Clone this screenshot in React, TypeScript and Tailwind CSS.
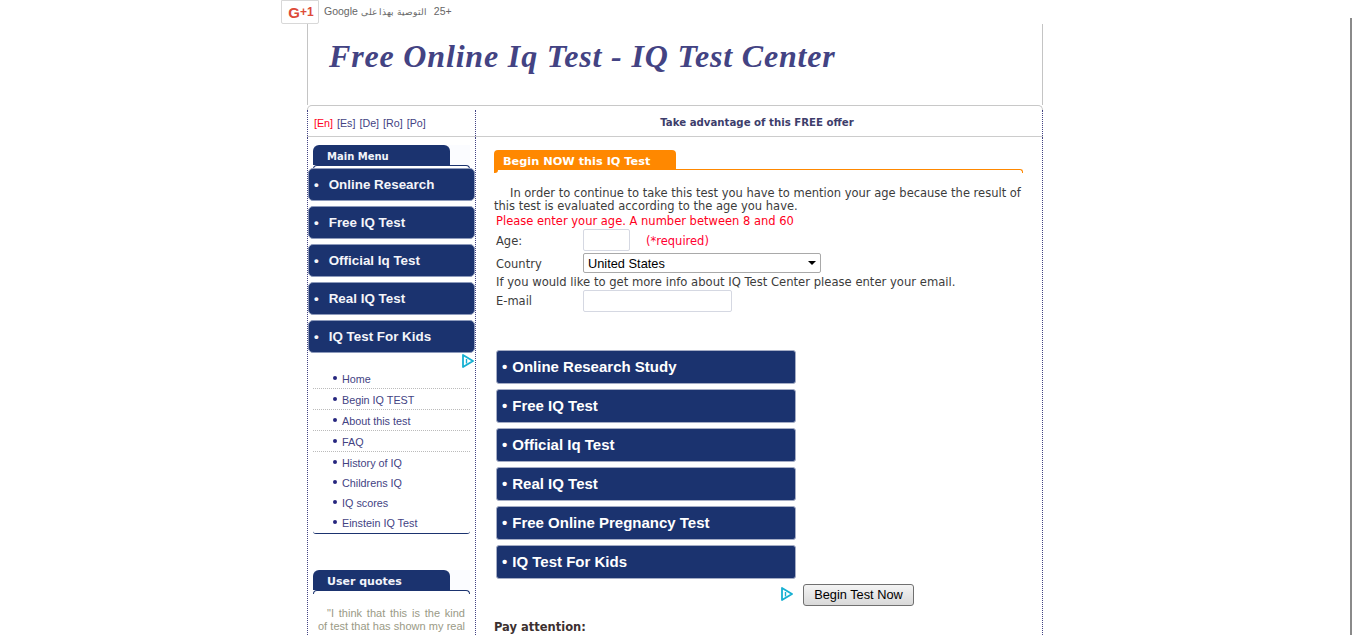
import React from 'react';

const sideMenu = ['Online Research', 'Free IQ Test', 'Official Iq Test', 'Real IQ Test', 'IQ Test For Kids'];
const sideLinks = ['Home', 'Begin IQ TEST', 'About this test', 'FAQ'];
const sideLinksPlain = ['History of IQ', 'Childrens IQ', 'IQ scores', 'Einstein IQ Test'];
const adLinks = ['Online Research Study', 'Free IQ Test', 'Official Iq Test', 'Real IQ Test', 'Free Online Pregnancy Test', 'IQ Test For Kids'];
const langs = ['[Es]', '[De]', '[Ro]', '[Po]'];

function AdIcon({ className }: { className?: string }) {
  return (
    <svg viewBox="0 0 12 14" className={className} fill="none">
      <path d="M1 1 L11 7 L1 13 Z" stroke="#16b0d2" strokeWidth="1.8" strokeLinejoin="round" />
      <path d="M4.5 5 V9.5" stroke="#16b0d2" strokeWidth="1.4" />
    </svg>
  );
}

function SideTab({ title, sizeClass }: { title: string; sizeClass: string }) {
  return (
    <div className="ml-[5px] mr-[5px] bg-[#fbfcff]">
      <div className={`w-[137px] h-[20px] bg-[#1b336f] rounded-t-[6px] pl-[14px] leading-[23px] font-bold text-[#f2f4fa] ${sizeClass}`}>
        {title}
      </div>
      <div className="h-[4px] border-t border-l border-r border-[#1b336f] rounded-t-[4px] bg-white" />
    </div>
  );
}

export default function App() {
  return (
    <div className="h-[635px] overflow-hidden bg-white flex font-['DejaVu_Sans',sans-serif]">
      <div className="w-[1350px] flex flex-col items-center">
        <div className="w-[736px] shrink-0">
          {/* google plus bar */}
          <div className="h-[24px] -ml-[26px] flex items-center gap-[5px] font-['Liberation_Sans',sans-serif] text-[#666666]">
            <div className="w-[38px] h-[24px] pl-[2px] border border-[#d8d8d8] rounded-b-[2px] flex items-center justify-center font-bold text-[#dd4b39]">
              <span className="text-[15px] leading-none">G</span>
              <span className="text-[12px] leading-none">+1</span>
            </div>
            <span dir="rtl" className="text-[10.5px]">
              <span className="text-[9px]">التوصية بهذا على</span> Google
            </span>
            <span dir="rtl" className="ml-[2px] text-[10.5px]">+25</span>
          </div>

          {/* header */}
          <div className="h-[81px] border-l border-r border-[#c4c4c4] pl-[21px] pt-[12px]">
            <h1 className="font-['Liberation_Serif',serif] italic font-bold text-[32px] leading-[40px] tracking-[0.83px] text-[#434383]">
              Free Online Iq Test - IQ Test Center
            </h1>
          </div>

          {/* language row */}
          <div className="h-[5px] border-t border-l border-r border-[#c8c8c8] rounded-t-[5px]" />
          <div className="h-[26px] flex border-l border-r border-dotted border-[#434383]">
            <div className="w-[168px] shrink-0 pl-[6px] flex items-center gap-[4px] text-[10.7px] text-[#434383] font-['Liberation_Sans',sans-serif] border-r border-dotted border-[#434383]">
              <span className="text-[#ff0022]">[En]</span>
              {langs.map((l) => (
                <span key={l}>{l}</span>
              ))}
            </div>
            <div className="flex-1 pr-[4px] text-center text-[10.2px] leading-[26px] font-bold text-[#3d3d6b]">Take advantage of this FREE offer</div>
          </div>
          <div className="h-[1px] bg-[#cccccc]" />

          <div className="flex h-[498px] border-l border-r border-dotted border-[#434383]">
            {/* sidebar */}
            <div className="w-[168px] shrink-0 border-r border-dotted border-[#434383] pt-[8px]">
              <SideTab title="Main Menu" sizeClass="text-[10px]" />
              <div className="flex flex-col gap-[5px] -mt-px">
                {sideMenu.map((m) => (
                  <div
                    key={m}
                    className="h-[33px] pt-[2px] bg-[#1b336f] border border-[#8d9abb] rounded-[5px] flex items-center pl-[5px] gap-[10px] font-['Liberation_Sans',sans-serif] font-bold text-[13.4px] text-[#f4f5fa]"
                  >
                    <span>•</span>
                    <span>{m}</span>
                  </div>
                ))}
              </div>
              <div className="flex justify-end h-[15px] pr-[1px] pt-[1px]">
                <AdIcon className="w-[12px] h-[14px]" />
              </div>
              <ul className="mx-[5px] border-b border-[#1b336f] rounded-b-[3px] pb-[1px] text-[10.8px] text-[#434383] font-['Liberation_Sans',sans-serif]">
                {sideLinks.map((l) => (
                  <li key={l} className="h-[21px] pt-[2px] border-b border-dotted border-[#bbbbbb] pl-[20px] flex items-center gap-[5px]">
                    <span className="w-[4px] h-[4px] mb-[2px] rounded-full bg-[#26267f]" />
                    <span>{l}</span>
                  </li>
                ))}
                {sideLinksPlain.map((l) => (
                  <li key={l} className="h-[20px] pt-[2px] pl-[20px] flex items-center gap-[5px]">
                    <span className="w-[4px] h-[4px] mb-[2px] rounded-full bg-[#26267f]" />
                    <span>{l}</span>
                  </li>
                ))}
              </ul>
              <div className="mt-[36px]">
                <SideTab title="User quotes" sizeClass="text-[11px]" />
                <p className="mx-[10px] mt-[13px] text-[11px] leading-[13px] text-[#9a9a86] text-justify font-['Liberation_Sans',sans-serif] indent-[9px]">
                  "I think that this is the kind of test that has shown my real intelligence in many areas of my life, thanks a lot for this test.
                </p>
              </div>
            </div>

            {/* main column */}
            <div className="flex-1 pl-[18px] pr-[19px] pt-[13px] text-[11.5px] text-[#3c3c3c]">
              <div className="flex items-start h-[20px]">
                <div className="w-[182px] shrink-0">
                  <div className="h-[20px] bg-[#ff8800] rounded-t-[4px] pl-[9px] text-[11.3px] leading-[23px] font-bold text-white">
                    Begin NOW this IQ Test
                  </div>
                  <div className="w-[4px] h-[3px] bg-[#ff8800] rounded-br-[4px]" />
                </div>
                <div className="flex-1 mt-[19px] h-[4px] border-t border-r border-[#ff8800] rounded-tr-[3px]" />
              </div>

              <p className="mt-[17px] leading-[13px] indent-[16px]">
                In order to continue to take this test you have to mention your age because the result of this test is evaluated according to the age you have.
              </p>
              <div className="px-[2px]">
                <div className="mt-[1px] leading-[15px] text-[#ff0022]">Please enter your age. A number between 8 and 60</div>
                <div className="flex items-center h-[22px]">
                  <span className="w-[87px] pt-[4px]">Age:</span>
                  <input className="w-[47px] h-[22px] border border-[#d5d8e2] rounded-[2px] bg-white" />
                  <span className="ml-[16px] pt-[4px] text-[#ff0033]">(*required)</span>
                </div>
                <div className="mt-[2px] flex items-center h-[20px]">
                  <span className="w-[87px] pt-[4px]">Country</span>
                  <div className="relative">
                    <select className="block w-[238px] h-[20px] border border-[#a9a9a9] rounded-[2px] bg-white text-[12.8px] text-black font-['Liberation_Sans',sans-serif] appearance-none pl-[4px]">
                      <option>United States</option>
                    </select>
                    <span className="absolute right-[5px] top-[8px] w-0 h-0 border-l-[4px] border-r-[4px] border-t-[4px] border-l-transparent border-r-transparent border-t-black" />
                  </div>
                </div>
                <div className="mt-[1px] h-[16px] leading-[16px] text-[11.6px]">If you would like to get more info about IQ Test Center please enter your email.</div>
                <div className="flex items-center h-[22px]">
                  <span className="w-[87px] mt-[1px]">E-mail</span>
                  <input className="w-[149px] h-[22px] border border-[#d5d8e2] rounded-[2px] bg-white" />
                </div>

                <div className="mt-[38px] flex flex-col gap-[5px]">
                  {adLinks.map((a) => (
                    <div
                      key={a}
                      className="w-[300px] h-[34px] px-[5px] bg-[#1b336f] border border-[#a5adc5] rounded-[3px] flex items-center gap-[5px] font-['Liberation_Sans',sans-serif] font-bold text-[15px] text-white"
                    >
                      <span>•</span>
                      <span>{a}</span>
                    </div>
                  ))}
                </div>

                <div className="mt-[5px] h-[22px] flex items-center">
                  <AdIcon className="ml-[285px] -mt-[3px] w-[12px] h-[14px]" />
                  <button className="ml-[10px] w-[111px] h-[22px] border border-[#707070] rounded-[3px] bg-gradient-to-b from-[#f4f4f4] to-[#d9d9d9] text-[12.8px] text-black font-['Liberation_Sans',sans-serif]">
                    Begin Test Now
                  </button>
                </div>
              </div>
              <div className="mt-[13px] font-bold text-[#3c3030]">Pay attention:</div>
            </div>
          </div>
        </div>
      </div>
      <div className="w-[2px] mt-[18px] bg-[#8a8a8a]" />
    </div>
  );
}
